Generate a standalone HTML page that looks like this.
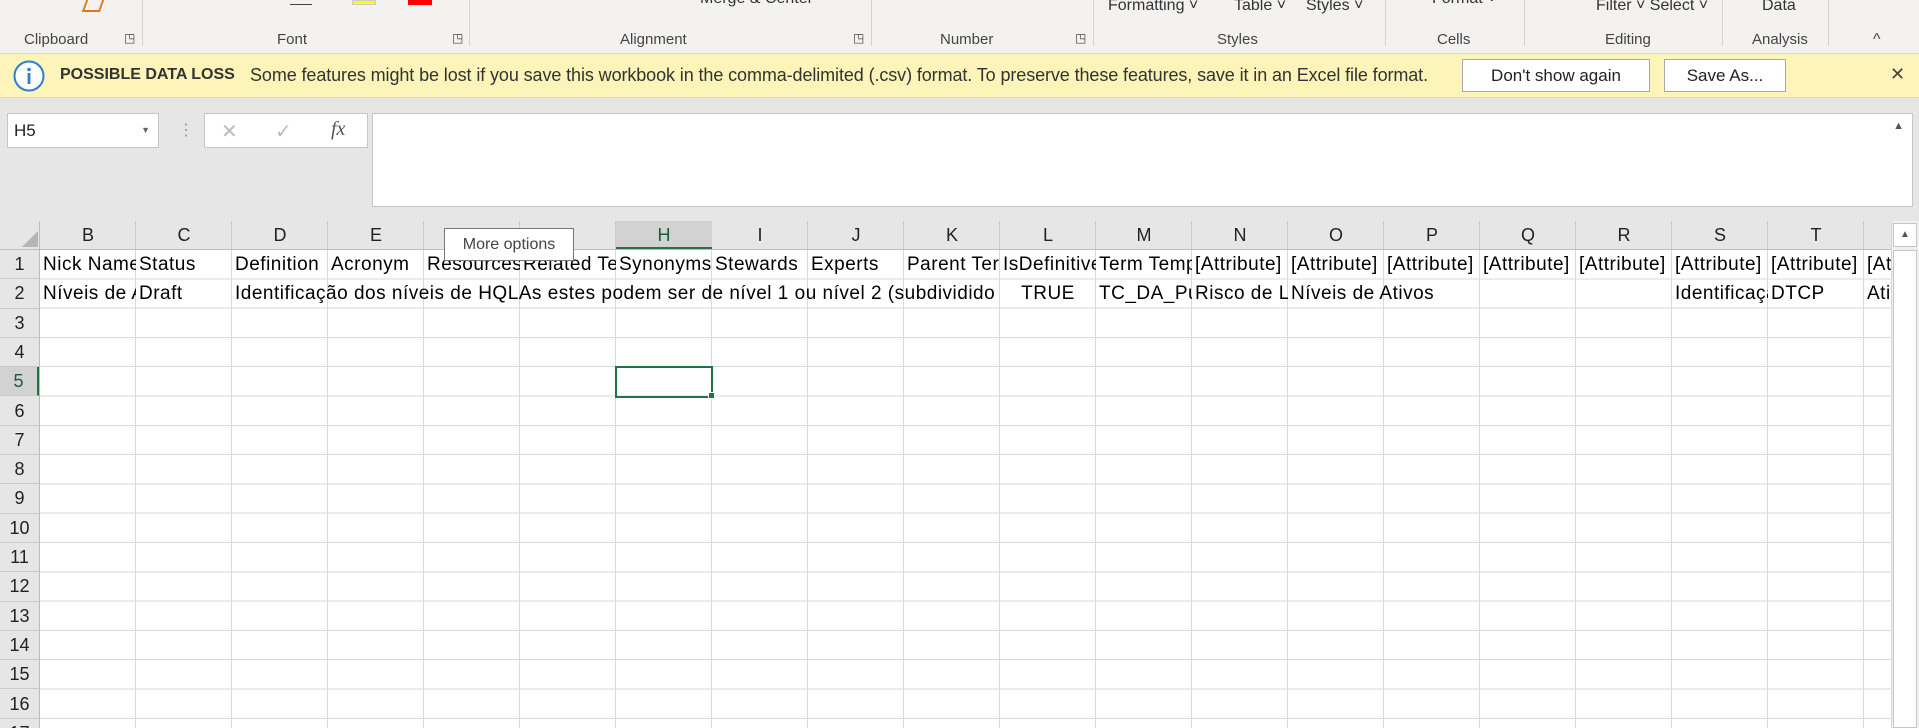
<!DOCTYPE html>
<html><head><meta charset="utf-8">
<style>
*{margin:0;padding:0;box-sizing:border-box}
html,body{width:1919px;height:728px;overflow:hidden}
body{position:relative;background:#e6e6e6;font-family:"Liberation Sans",sans-serif;color:#000}
.a{position:absolute}
#rib{left:0;top:0;width:1919px;height:54px;background:#f3f2f1;border-bottom:1px solid #d6d6d6;overflow:hidden}
.gl{position:absolute;top:31px;font-size:15px;color:#444;white-space:nowrap}
.sep{position:absolute;top:0;width:1px;height:46px;background:#d4d4d4}
.tt{position:absolute;top:-3px;font-size:16px;color:#333;white-space:nowrap}
#bar{left:0;top:54px;width:1919px;height:44px;background:#fcf4b8;border-bottom:1px solid #e8dc8e}
.btn{position:absolute;top:5px;height:33px;background:#fff;border:1px solid #a9a9a9;font-size:17px;color:#222;text-align:center;line-height:31px}
#grid{left:40px;top:250px;width:1851px;height:478px;background-color:#fff;
background-image:repeating-linear-gradient(to right,transparent 0 95px,#d9d9d9 95px 96px),repeating-linear-gradient(to bottom,transparent 0 28.3px,#d9d9d9 28.3px 29.3px)}
#ch{left:40px;top:221px;width:1851px;height:29px;background:#e6e6e6;border-bottom:1px solid #bdbdbd;
background-image:repeating-linear-gradient(to right,transparent 0 95px,#cacaca 95px 96px)}
.h{position:absolute;top:0;width:96px;height:28px;line-height:28px;text-align:center;font-size:18px;color:#222}
#rh{left:0;top:250px;width:40px;height:478px;background:#e6e6e6;border-right:1px solid #bdbdbd;overflow:hidden}
.r{position:absolute;left:0;width:39px;height:29.3px;line-height:29px;text-align:center;font-size:18px;color:#222;border-bottom:1px solid #cacaca}
.c{position:absolute;height:29px;line-height:29px;overflow:hidden;white-space:nowrap;font-size:19px;padding-left:3px;letter-spacing:0.5px}
</style></head><body>
<div id="rib" class="a">
  <div class="a" style="left:84px;top:0;width:18px;height:12px;border:2px solid #e07a10;border-top:none;transform:skewX(-20deg)"></div>
  <div class="a" style="left:352px;top:0;width:24px;height:5px;background:#ff0;border:1px solid #ccc"></div>
  <div class="a" style="left:408px;top:0;width:24px;height:5px;background:#f00"></div>
  <div class="a" style="left:290px;top:4px;width:22px;height:1px;background:#444"></div>
  <div class="tt" style="left:700px;top:-10px">Merge &amp; Center</div>
  <div class="tt" style="left:1108px">Formatting ˅</div>
  <div class="tt" style="left:1234px">Table ˅</div>
  <div class="tt" style="left:1306px">Styles ˅</div>
  <div class="tt" style="left:1432px;top:-10px">Format ˅</div>
  <div class="tt" style="left:1596px">Filter ˅ Select ˅</div>
  <div class="tt" style="left:1762px">Data</div>
  <div class="gl" style="left:24px">Clipboard</div><div class="gl" style="left:124px;font-size:12px">◳</div>
  <div class="sep" style="left:142px"></div>
  <div class="gl" style="left:277px">Font</div><div class="gl" style="left:452px;font-size:12px">◳</div>
  <div class="sep" style="left:469px"></div>
  <div class="gl" style="left:620px">Alignment</div><div class="gl" style="left:853px;font-size:12px">◳</div>
  <div class="sep" style="left:871px"></div>
  <div class="gl" style="left:940px">Number</div><div class="gl" style="left:1075px;font-size:12px">◳</div>
  <div class="sep" style="left:1093px"></div>
  <div class="gl" style="left:1217px">Styles</div>
  <div class="sep" style="left:1385px"></div>
  <div class="gl" style="left:1437px">Cells</div>
  <div class="sep" style="left:1524px"></div>
  <div class="gl" style="left:1605px">Editing</div>
  <div class="sep" style="left:1722px"></div>
  <div class="gl" style="left:1752px">Analysis</div>
  <div class="sep" style="left:1828px"></div>
  <div class="gl" style="left:1873px;font-size:16px">^</div>
</div>
<div id="bar" class="a">
  <svg class="a" style="left:13px;top:6px" width="32" height="32"><circle cx="16" cy="16" r="14.5" fill="#fff" stroke="#2a7fd4" stroke-width="2"/><circle cx="16" cy="9.5" r="1.8" fill="#2a7fd4"/><rect x="14.6" y="13" width="2.8" height="11" fill="#2a7fd4"/></svg>
  <div class="a" style="left:60px;top:12px;font-size:16px;font-weight:bold;color:#333">POSSIBLE DATA LOSS</div>
  <div class="a" style="left:250px;top:11px;font-size:18px;color:#333;white-space:nowrap;letter-spacing:-0.1px">Some features might be lost if you save this workbook in the comma-delimited (.csv) format. To preserve these features, save it in an Excel file format.</div>
  <div class="btn" style="left:1462px;width:188px">Don't show again</div>
  <div class="btn" style="left:1664px;width:122px">Save As...</div>
  <div class="a" style="left:1890px;top:10px;font-size:18px;color:#444">✕</div>
</div>
<div class="a" style="left:7px;top:113px;width:152px;height:35px;background:#fff;border:1px solid #c6c6c6;font-size:17px;line-height:33px;padding-left:6px;color:#222">H5<span style="position:absolute;right:8px;top:0;font-size:9px;color:#666">▼</span></div>
<div class="a" style="left:178px;top:120px;color:#999;font-size:16px">⋮</div>
<div class="a" style="left:204px;top:113px;width:164px;height:35px;background:#fff;border:1px solid #c6c6c6">
  <span class="a" style="left:16px;top:5px;font-size:20px;color:#bbb">✕</span>
  <span class="a" style="left:70px;top:5px;font-size:20px;color:#bbb">✓</span>
  <span class="a" style="left:126px;top:4px;font-size:20px;color:#555;font-family:'Liberation Serif',serif;font-style:italic">fx</span>
</div>
<div class="a" style="left:372px;top:113px;width:1541px;height:94px;background:#fff;border:1px solid #c6c6c6"><span class="a" style="right:8px;top:6px;font-size:11px;color:#555">▲</span></div>

<div class="a" style="left:0;top:221px;width:40px;height:29px;background:#e6e6e6;border-right:1px solid #bdbdbd;border-bottom:1px solid #bdbdbd"><svg class="a" style="left:22px;top:10px" width="16" height="16"><polygon points="16,0 16,16 0,16" fill="#b5b5b5"/></svg></div>
<div id="ch" class="a">
  <div class="h" style="left:0">B</div><div class="h" style="left:96px">C</div><div class="h" style="left:192px">D</div><div class="h" style="left:288px">E</div><div class="h" style="left:384px">F</div><div class="h" style="left:480px">G</div>
  <div class="h" style="left:576px;background:#d2d2d2;border-bottom:2px solid #217346;color:#1e5c38">H</div>
  <div class="h" style="left:672px">I</div><div class="h" style="left:768px">J</div><div class="h" style="left:864px">K</div><div class="h" style="left:960px">L</div><div class="h" style="left:1056px">M</div><div class="h" style="left:1152px">N</div><div class="h" style="left:1248px">O</div><div class="h" style="left:1344px">P</div><div class="h" style="left:1440px">Q</div><div class="h" style="left:1536px">R</div><div class="h" style="left:1632px">S</div><div class="h" style="left:1728px">T</div>
</div>
<div id="rh" class="a">
  <div class="r" style="top:0">1</div><div class="r" style="top:29.3px">2</div><div class="r" style="top:58.6px">3</div><div class="r" style="top:87.9px">4</div>
  <div class="r" style="top:117.2px;background:#d2d2d2;border-right:2px solid #217346;color:#1e5c38">5</div>
  <div class="r" style="top:146.5px">6</div><div class="r" style="top:175.8px">7</div><div class="r" style="top:205.1px">8</div><div class="r" style="top:234.4px">9</div><div class="r" style="top:263.7px">10</div><div class="r" style="top:293px">11</div><div class="r" style="top:322.3px">12</div><div class="r" style="top:351.6px">13</div><div class="r" style="top:380.9px">14</div><div class="r" style="top:410.2px">15</div><div class="r" style="top:439.5px">16</div><div class="r" style="top:468.8px">17</div>
</div>
<div id="grid" class="a"></div>
<div class="c" style="top:250px;left:40px;width:96px">Nick Name</div>
<div class="c" style="top:250px;left:136px;width:96px">Status</div>
<div class="c" style="top:250px;left:232px;width:96px">Definition</div>
<div class="c" style="top:250px;left:328px;width:96px">Acronym</div>
<div class="c" style="top:250px;left:424px;width:96px">Resources</div>
<div class="c" style="top:250px;left:520px;width:96px">Related Terms</div>
<div class="c" style="top:250px;left:616px;width:96px">Synonyms</div>
<div class="c" style="top:250px;left:712px;width:96px">Stewards</div>
<div class="c" style="top:250px;left:808px;width:96px">Experts</div>
<div class="c" style="top:250px;left:904px;width:96px">Parent Term</div>
<div class="c" style="top:250px;left:1000px;width:96px">IsDefinitive</div>
<div class="c" style="top:250px;left:1096px;width:96px">Term Template</div>
<div class="c" style="top:250px;left:1192px;width:96px">[Attribute]</div>
<div class="c" style="top:250px;left:1288px;width:96px">[Attribute]</div>
<div class="c" style="top:250px;left:1384px;width:96px">[Attribute]</div>
<div class="c" style="top:250px;left:1480px;width:96px">[Attribute]</div>
<div class="c" style="top:250px;left:1576px;width:96px">[Attribute]</div>
<div class="c" style="top:250px;left:1672px;width:96px">[Attribute]</div>
<div class="c" style="top:250px;left:1768px;width:96px">[Attribute]</div>
<div class="c" style="top:250px;left:1864px;width:27px">[Attribute]</div>
<div class="c" style="top:279.3px;left:40px;width:96px">Níveis de Ativos</div>
<div class="c" style="top:279.3px;left:136px;width:96px">Draft</div>
<div class="c" style="top:279.3px;left:232px;width:768px">Identificação dos níveis de HQLAs estes podem ser de nível 1 ou nível 2 (subdividido em 2A e 2B)</div>
<div class="c" style="top:279.3px;left:1000px;width:96px;text-align:center;padding:0">TRUE</div>
<div class="c" style="top:279.3px;left:1096px;width:96px">TC_DA_Publicado</div>
<div class="c" style="top:279.3px;left:1192px;width:96px">Risco de Liquidez</div>
<div class="c" style="top:279.3px;left:1288px;width:192px">Níveis de Ativos</div>
<div class="c" style="top:279.3px;left:1672px;width:96px">Identificação</div>
<div class="c" style="top:279.3px;left:1768px;width:96px">DTCP</div>
<div class="c" style="top:279.3px;left:1864px;width:27px">Ativos</div>
<div class="a" style="left:615px;top:366px;width:98px;height:31.5px;border:2px solid #217346"></div>
<div class="a" style="left:708px;top:392px;width:7px;height:7px;background:#217346;border:1px solid #fff"></div>
<div class="a" style="left:444px;top:228px;width:130px;height:33px;background:#fff;border:1px solid #777;font-size:16px;line-height:31px;text-align:center;color:#444">More options</div>
<div class="a" style="left:1891px;top:221px;width:28px;height:507px;background:#f0f0f0;border-left:1px solid #d6d6d6"></div>
<div class="a" style="left:1893px;top:223px;width:24px;height:24px;background:#fff;border:1px solid #c6c6c6;font-size:10px;text-align:center;line-height:22px;color:#555">▲</div>
<div class="a" style="left:1893px;top:250px;width:24px;height:478px;background:#fff;border:1px solid #c6c6c6"></div>
</body></html>
